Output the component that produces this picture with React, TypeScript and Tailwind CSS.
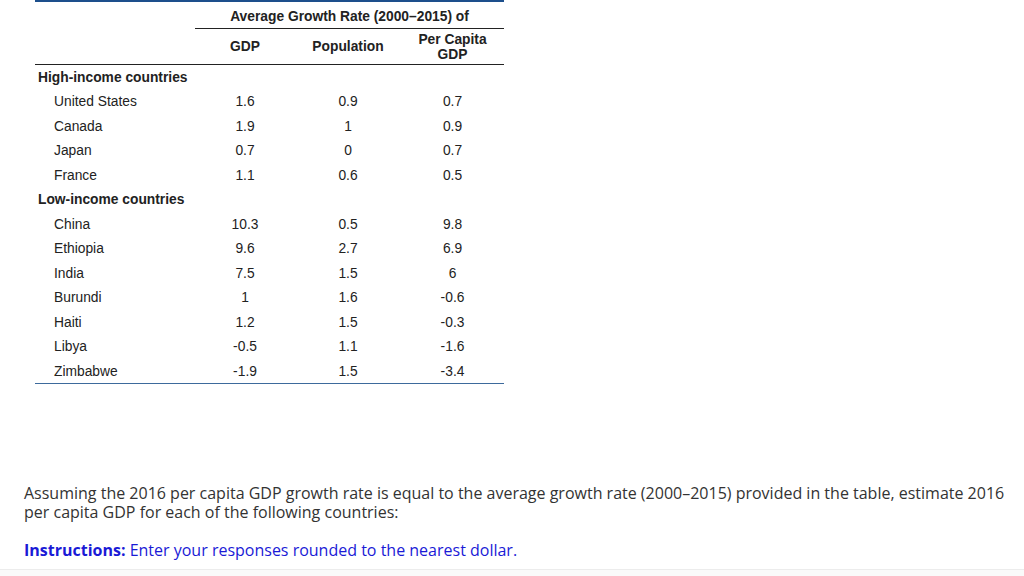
const rows: { name: string; gdp: string; pop: string; pc: string; group?: boolean }[] = [
  { name: "High-income countries", gdp: "", pop: "", pc: "", group: true },
  { name: "United States", gdp: "1.6", pop: "0.9", pc: "0.7" },
  { name: "Canada", gdp: "1.9", pop: "1", pc: "0.9" },
  { name: "Japan", gdp: "0.7", pop: "0", pc: "0.7" },
  { name: "France", gdp: "1.1", pop: "0.6", pc: "0.5" },
  { name: "Low-income countries", gdp: "", pop: "", pc: "", group: true },
  { name: "China", gdp: "10.3", pop: "0.5", pc: "9.8" },
  { name: "Ethiopia", gdp: "9.6", pop: "2.7", pc: "6.9" },
  { name: "India", gdp: "7.5", pop: "1.5", pc: "6" },
  { name: "Burundi", gdp: "1", pop: "1.6", pc: "-0.6" },
  { name: "Haiti", gdp: "1.2", pop: "1.5", pc: "-0.3" },
  { name: "Libya", gdp: "-0.5", pop: "1.1", pc: "-1.6" },
  { name: "Zimbabwe", gdp: "-1.9", pop: "1.5", pc: "-3.4" },
];

function GrowthTable() {
  return (
    <div className="ml-[35px] w-[469px] border-t-2 border-[#1d4f8c] border-b border-b-[#3d6a9c] font-['Liberation_Sans',Arial,sans-serif] text-[13.8px] text-[#222]">
      <div className="grid grid-cols-[160px_100px_106px_103px]">
        <div />
        <div className="col-span-3 border-b border-[#222] pt-[7px] pb-[4px] text-center font-bold leading-[15px]">
          Average Growth Rate (2000–2015) of
        </div>
      </div>
      <div className="grid h-[36px] grid-cols-[160px_100px_106px_103px] items-center border-b border-[#222] font-bold leading-[15px]">
        <div />
        <div className="text-center">GDP</div>
        <div className="text-center">Population</div>
        <div className="text-center">
          Per Capita
          <br />
          GDP
        </div>
      </div>
      <div className="pt-[1px]">
        {rows.map((r, i) => (
          <div
            key={r.name}
            className={
              i === rows.length - 1
                ? "grid h-[23px] grid-cols-[160px_100px_106px_103px] items-start pt-[2px]"
                : "grid h-[24.5px] grid-cols-[160px_100px_106px_103px] items-center"
            }
          >
            {r.group ? (
              <div className="col-span-4 pl-[3px] font-bold">{r.name}</div>
            ) : (
              <>
                <div className="pl-[19px]">{r.name}</div>
                <div className="text-center">{r.gdp}</div>
                <div className="text-center">{r.pop}</div>
                <div className="text-center">{r.pc}</div>
              </>
            )}
          </div>
        ))}
      </div>
    </div>
  );
}

export default function App() {
  return (
    <div className="h-[576px] w-[1024px] overflow-hidden bg-white">
      <GrowthTable />
      <div className="mt-[100px] pl-[24px] pr-[4px] font-['Open_Sans',sans-serif] text-[16px] leading-[19px] text-[#333]">
        <p>
          Assuming the 2016 per capita GDP growth rate is equal to the average growth rate (2000–2015) provided in the table, estimate 2016 per capita GDP for each of the following countries:
        </p>
        <p className="mt-[19px] text-[#1a1ad6]">
          <span className="font-bold">Instructions:</span> Enter your responses rounded to the nearest dollar.
        </p>
      </div>
      <div className="mt-[9px] h-[20px] border-t border-[#ececec] bg-[#fafafa]" />
    </div>
  );
}
